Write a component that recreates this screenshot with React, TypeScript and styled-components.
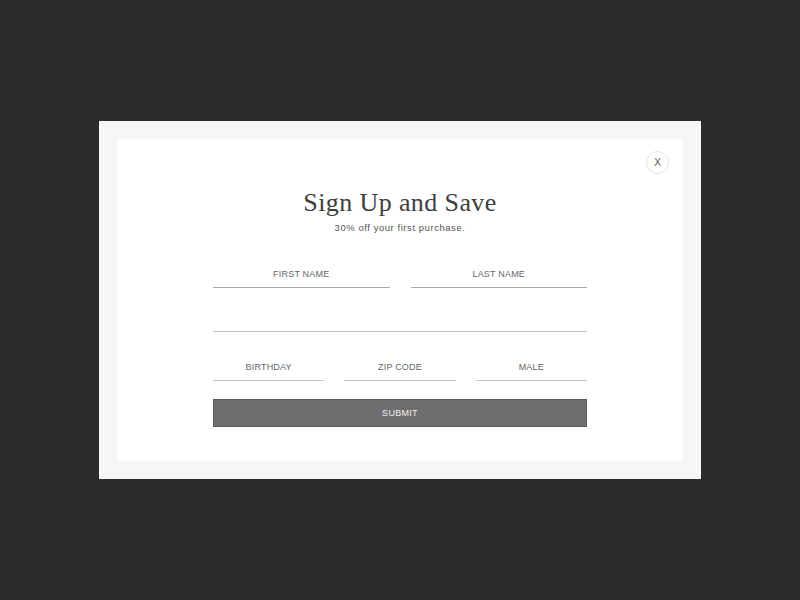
import styled, { createGlobalStyle } from "styled-components";

const GlobalStyle = createGlobalStyle`
  html, body {
    margin: 0;
    padding: 0;
    background: #2b2b2b;
  }
`;

const Page = styled.div`
  min-height: 100vh;
  display: flex;
  align-items: center;
  justify-content: center;
`;

const Frame = styled.div`
  width: 602px;
  height: 358px;
  box-sizing: border-box;
  padding: 18px;
  background: #f7f6f4;
`;

const Card = styled.div`
  position: relative;
  height: 100%;
  background: #ffffff;
  display: flex;
  flex-direction: column;
  align-items: center;
  padding-top: 49px;
  box-sizing: border-box;
`;

const CloseButton = styled.button`
  position: absolute;
  top: 12px;
  right: 14px;
  width: 23px;
  height: 23px;
  padding: 0;
  border-radius: 50%;
  border: 1px solid #e4e4e4;
  background: #ffffff;
  color: #555555;
  font-family: "Liberation Sans", Arial, sans-serif;
  font-size: 10px;
  line-height: 21px;
  cursor: pointer;
`;

const Title = styled.h1`
  margin: 0;
  font-family: "Liberation Serif", "Times New Roman", serif;
  font-weight: 400;
  font-size: 26px;
  line-height: 30px;
  letter-spacing: 0.4px;
  color: #3e3e3e;
`;

const Subtitle = styled.p`
  margin: 3px 0 0;
  font-family: "Liberation Sans", Arial, sans-serif;
  font-size: 9.5px;
  line-height: 14px;
  letter-spacing: 0.55px;
  color: #555555;
`;

const Form = styled.form`
  width: 374px;
  margin-top: 30px;
  display: flex;
  flex-direction: column;
`;

const Row = styled.div<{ $cols: number; $gap: number; $top?: number }>`
  display: grid;
  grid-template-columns: repeat(${({ $cols }) => $cols}, 1fr);
  column-gap: ${({ $gap }) => $gap}px;
  margin-top: ${({ $top }) => $top ?? 0}px;
`;

const Field = styled.input<{ $line?: string }>`
  width: 100%;
  height: 23px;
  box-sizing: border-box;
  padding: 0 0 5px;
  border: none;
  border-bottom: 1px solid ${({ $line }) => $line ?? "#a9a9a9"};
  background: transparent;
  outline: none;
  text-align: center;
  font-family: "Liberation Sans", Arial, sans-serif;
  font-size: 9px;
  letter-spacing: 0.2px;
  color: #444444;

  &::placeholder {
    color: #666666;
  }
`;

const Submit = styled.button`
  margin-top: 18px;
  height: 28px;
  width: 100%;
  border: 1px solid #5c5c5c;
  background: #6e6e6e;
  color: #f0f0f0;
  font-family: "Liberation Sans", Arial, sans-serif;
  font-size: 9px;
  letter-spacing: 0.3px;
  cursor: pointer;
`;

function App() {
  return (
    <Page>
      <GlobalStyle />
      <Frame>
        <Card>
          <CloseButton type="button">X</CloseButton>
          <Title>Sign Up and Save</Title>
          <Subtitle>30% off your first purchase.</Subtitle>
          <Form onSubmit={(e) => e.preventDefault()}>
            <Row $cols={2} $gap={21}>
              <Field placeholder="FIRST NAME" />
              <Field placeholder="LAST NAME" />
            </Row>
            <Row $cols={1} $gap={0} $top={21}>
              <Field type="email" $line="#c4c4c4" />
            </Row>
            <Row $cols={3} $gap={20} $top={26}>
              <Field placeholder="BIRTHDAY" $line="#c4c4c4" />
              <Field placeholder="ZIP CODE" $line="#c4c4c4" />
              <Field placeholder="MALE" $line="#c4c4c4" />
            </Row>
            <Submit type="submit">SUBMIT</Submit>
          </Form>
        </Card>
      </Frame>
    </Page>
  );
}

export default App;
